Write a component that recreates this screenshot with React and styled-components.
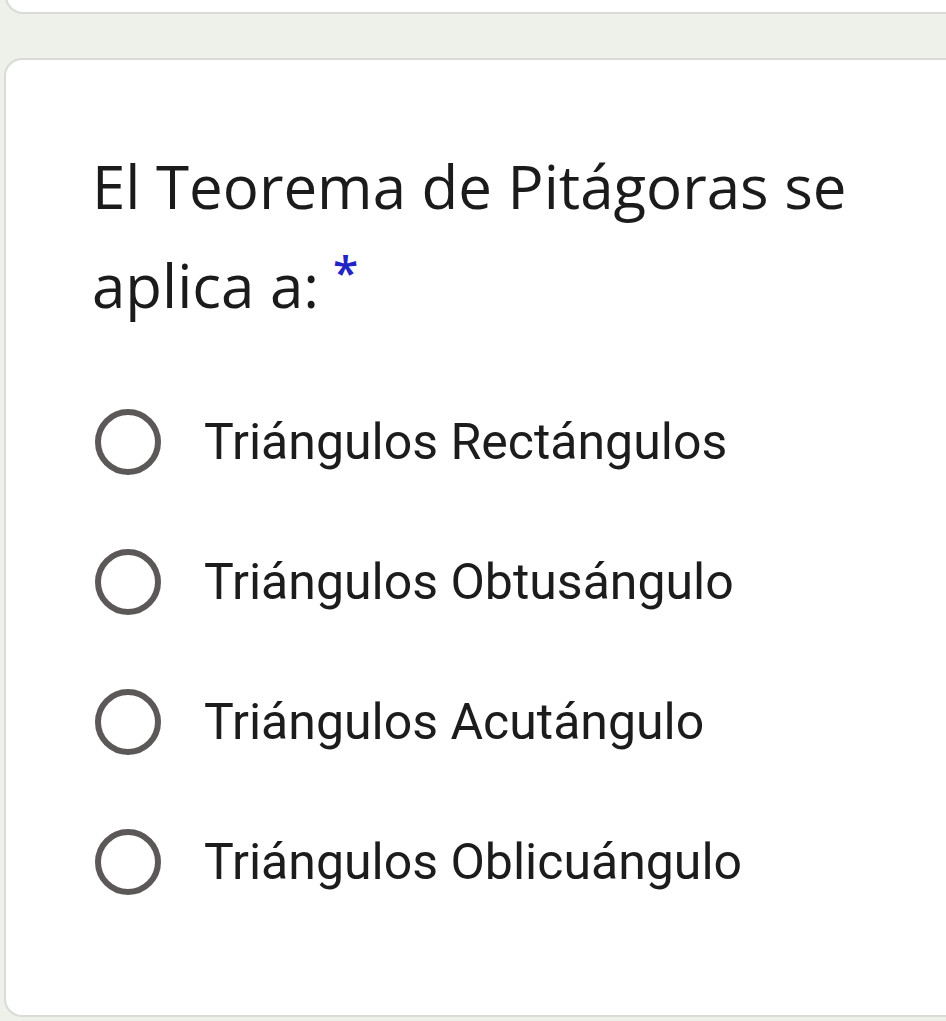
import React from "react";
import styled, { createGlobalStyle } from "styled-components";

const Global = createGlobalStyle`
  html, body {
    margin: 0;
    padding: 0;
    background: #edf1ea;
  }
  body {
    width: 946px;
    height: 1021px;
    overflow: hidden;
  }
`;

const Page = styled.div`
  display: flex;
  flex-direction: column;
  gap: 44px;
  padding-left: 4px;
  margin-top: -30px;
`;

const Card = styled.div`
  background: #ffffff;
  border: 2px solid #d9dbd7;
  border-right: none;
  border-radius: 18px 0 0 18px;
  box-sizing: border-box;
  height: ${(p) => p.h}px;
  margin-left: ${(p) => p.inset || 0}px;
`;

const Question = styled(Card)`
  padding: 84px 0 0 86px;
`;

const Title = styled.h1`
  margin: 0;
  font-family: "Open Sans", "Noto Sans", sans-serif;
  font-weight: 400;
  font-size: 60px;
  line-height: 85px;
  color: #1b1b1b;
`;

const Required = styled.span`
  color: #2424c4;
  font-size: 46px;
  font-weight: 600;
  vertical-align: 19px;
  margin-left: 14px;
`;

const Options = styled.div`
  display: flex;
  flex-direction: column;
  gap: 74px;
  margin-top: 81px;
`;

const Option = styled.label`
  display: flex;
  align-items: center;
  gap: 43px;
  height: 66px;
  padding-left: 3px;
`;

const Radio = styled.span`
  width: 66px;
  height: 66px;
  box-sizing: border-box;
  border: 6px solid #5c5858;
  border-radius: 50%;
  flex: none;
`;

const OptionText = styled.span`
  font-family: Roboto, "Noto Sans", sans-serif;
  font-size: 50px;
  line-height: 60px;
  color: #1c1c1c;
`;

const options = [
  "Triángulos Rectángulos",
  "Triángulos Obtusángulo",
  "Triángulos Acutángulo",
  "Triángulos Oblicuángulo",
];

export default function App() {
  return (
    <>
      <Global />
      <Page>
        <Card h={44} inset={1} />
        <Question h={959}>
          <Title>
            El Teorema de Pitágoras se
            <br />
            aplica a:<Required>*</Required>
          </Title>
          <Options>
            {options.map((o) => (
              <Option key={o}>
                <Radio />
                <OptionText>{o}</OptionText>
              </Option>
            ))}
          </Options>
        </Question>
      </Page>
    </>
  );
}
